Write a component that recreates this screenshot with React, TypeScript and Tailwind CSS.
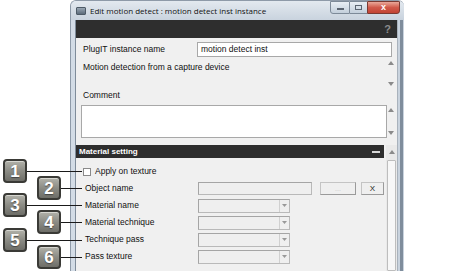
import React from "react";

const font = { fontFamily: '"Liberation Sans", Arial, sans-serif' };

function Up() {
  return (
    <svg width="6" height="4" viewBox="0 0 6 4" className="block">
      <path d="M0 4 L3 0 L6 4 Z" fill="#8a8a8a" />
    </svg>
  );
}
function Down() {
  return (
    <svg width="6" height="4" viewBox="0 0 6 4" className="block">
      <path d="M0 0 L3 4 L6 0 Z" fill="#8a8a8a" />
    </svg>
  );
}

function Combo() {
  return (
    <div className="w-[92px] h-[14px] border border-[#b9b9b9] border-t-[#a5a5a5] border-l-[#a5a5a5] bg-[#efefef] flex justify-end items-stretch">
      <div className="w-[10px] border-l border-[#d0d0d0] flex items-center justify-center">
        <svg width="5" height="3" viewBox="0 0 5 3"><path d="M0 0 L2.5 3 L5 0 Z" fill="#999" /></svg>
      </div>
    </div>
  );
}

function Row({ label, children }: { label: string; children?: React.ReactNode }) {
  return (
    <div className="h-[17px] flex items-center pl-[9px]">
      <div className="w-[113px] text-[8.5px] text-[#111] leading-none">{label}</div>
      {children}
    </div>
  );
}

function Badge({ n, left, top }: { n: number; left: number; top: number }) {
  const lineStart = left + 24;
  return (
    <>
      <div
        className="absolute w-[24px] h-[24px] rounded-[4px] border-2 border-[#3a3a36] bg-gradient-to-b from-[#b2b2aa] via-[#8c8c85] to-[#6e6e68] flex items-center justify-center shadow-[inset_0_1px_0_#d6d6d0]"
        style={{ left, top }}
      >
        <span className="text-white font-bold text-[17px] leading-none [text-shadow:0_1px_1px_#444]" style={font}>
          {n}
        </span>
      </div>
      <div className="absolute h-px bg-[#1a1a1a]" style={{ left: lineStart, top: top + 12, width: 82 - lineStart }} />
    </>
  );
}

export default function App() {
  return (
    <div className="relative w-[474px] h-[271px] overflow-hidden bg-white" style={font}>
      <div className="flex h-full">
        <div className="w-[70px] shrink-0" />
        <div className="w-[334px] shrink-0 h-full flex flex-col rounded-t-[6px] bg-[#d3dce6] overflow-hidden border-t border-l border-[#8e9aa8]">
          {/* title bar */}
          <div className="h-[19px] flex items-start bg-gradient-to-b from-[#e3e9ef] to-[#c9d3de]">
            <div className="flex items-center h-[19px] pl-[5px]">
              <div className="w-[10px] h-[8px] bg-gradient-to-b from-[#9aa7b4] to-[#5c6b7a] border border-[#4d5a66] rounded-[1px]" />
              <span className="ml-[4px] text-[#111] leading-none whitespace-nowrap" style={{ fontFamily: '"Open Sans", "Liberation Sans", sans-serif', fontSize: "8px" }}>
                Edit motion detect : motion detect inst instance
              </span>
            </div>
            <div className="ml-auto mr-[4px] flex h-[13px]">
              <div className="w-[20px] h-full border border-[#7d8a98] rounded-bl-[3px] bg-gradient-to-b from-[#e8eef4] to-[#c3cfdb] flex items-end justify-center pb-[3px]">
                <div className="w-[7px] h-[2px] bg-[#5a6470]" />
              </div>
              <div className="w-[17px] h-full border-y border-[#7d8a98] bg-gradient-to-b from-[#e8eef4] to-[#c3cfdb] flex items-center justify-center">
                <div className="w-[7px] h-[5px] border border-[#5a6470]" />
              </div>
              <div className="w-[33px] h-full border border-[#7a3a32] rounded-br-[3px] bg-gradient-to-b from-[#e9a89a] via-[#d0594a] to-[#c24333] flex items-center justify-center">
                <span className="text-white font-bold text-[9px] leading-none">x</span>
              </div>
            </div>
          </div>
          {/* body */}
          <div className="flex flex-1 min-h-0">
            <div className="w-[5px] bg-[#d3dce6] border-r border-[#7f8c9a]" />
            <div className="flex-1 flex flex-col bg-[#f0f0f0]">
              <div className="h-[18px] bg-[#2e2e2e] flex items-center justify-end pr-[6px]">
                <span className="text-[#8c8c8c] font-bold text-[11px] leading-none">?</span>
              </div>
              {/* instance name */}
              <div className="flex items-center mt-[4px] h-[15px] pl-[7px] pr-[5px]">
                <div className="w-[114px] text-[8.5px] text-[#111] leading-none">PlugIT instance name</div>
                <div className="flex-1 h-[15px] border border-[#a8a8a8] bg-white flex items-center pl-[3px] text-[8.5px] text-[#111] leading-none">
                  motion detect inst
                </div>
              </div>
              {/* description */}
              <div className="flex h-[29px] mt-[2px] pl-[7px] pr-[2px]">
                <div className="flex-1 pt-[4px] text-[8.5px] text-[#111] leading-none">Motion detection from a capture device</div>
                <div className="w-[8px] flex flex-col justify-between items-center py-[2px]">
                  <Up />
                  <Down />
                </div>
              </div>
              <div className="pl-[7px] mt-[3px] text-[8.5px] text-[#111] leading-none h-[10px]">Comment</div>
              {/* comment */}
              <div className="flex mt-[4px] pl-[5px] pr-[2px]">
                <div className="flex-1 h-[33px] border border-[#a8a8a8] bg-white" />
                <div className="w-[8px] flex flex-col justify-between items-center py-[3px]">
                  <Up />
                  <Down />
                </div>
              </div>
              {/* material section */}
              <div className="flex flex-1 mt-[7px] min-h-0">
                <div className="flex-1 flex flex-col">
                  <div className="h-[13px] bg-[#2e2e2e] flex items-center pl-[3px] pr-[4px]">
                    <span className="text-white font-bold text-[8px] leading-none">Material setting</span>
                    <div className="ml-auto w-[8px] h-[2px] bg-[#d8d8d8]" />
                  </div>
                  <div className="mt-[5px]">
                    <div className="h-[17px] flex items-center pl-[7px]">
                      <div className="w-[8px] h-[8px] border border-[#8a8a8a] bg-white" />
                      <span className="ml-[4px] text-[8.5px] text-[#111] leading-none">Apply on texture</span>
                    </div>
                    <Row label="Object name">
                      <div className="w-[114px] h-[13px] border border-[#b9b9b9] border-t-[#a5a5a5] border-l-[#a5a5a5] bg-[#efefef]" />
                      <div className="ml-[8px] w-[36px] h-[13px] border border-[#c4c4c4] border-b-[#9a9a9a] border-r-[#9a9a9a] bg-[#efefef] flex items-center justify-center text-[7px] text-[#c8c8c8] leading-none">
                        ...
                      </div>
                      <div className="ml-[5px] w-[23px] h-[13px] border border-[#c4c4c4] border-b-[#9a9a9a] border-r-[#9a9a9a] bg-[#efefef] flex items-center justify-center text-[8px] text-[#222] leading-none">
                        X
                      </div>
                    </Row>
                    <Row label="Material name"><Combo /></Row>
                    <Row label="Material technique"><Combo /></Row>
                    <Row label="Technique pass"><Combo /></Row>
                    <Row label="Pass texture"><Combo /></Row>
                  </div>
                </div>
                <div className="w-[11px] ml-[2px] flex flex-col items-center bg-[#e9e9e9]">
                  <div className="h-[13px] flex items-center justify-center"><Up /></div>
                  <div className="mt-[2px] w-[9px] flex-1 border border-[#bdbdbd] bg-[#f7f7f7] rounded-[1px]" />
                </div>
              </div>
            </div>
            <div className="w-[7px] bg-[#c9d3de] border-l border-[#a9b2bc] flex justify-end">
              <div className="w-[3px] mr-[1px] bg-[#7f8d9c]" />
            </div>
          </div>
        </div>
        <div className="flex-1" />
      </div>
      <Badge n={1} left={3} top={159} />
      <Badge n={2} left={37} top={176} />
      <Badge n={3} left={3} top={193} />
      <Badge n={4} left={37} top={210} />
      <Badge n={5} left={3} top={228} />
      <Badge n={6} left={37} top={245} />
    </div>
  );
}
